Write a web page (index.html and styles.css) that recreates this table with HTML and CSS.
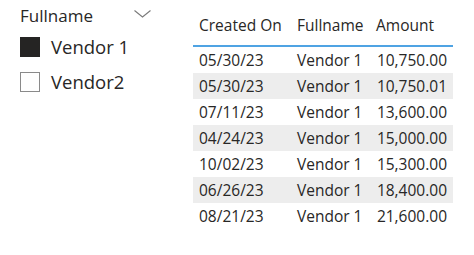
FILE: index.html
```html
<!DOCTYPE html>
<html>
<head>
<meta charset="utf-8">
<link rel="stylesheet" href="styles.css">
</head>
<body>
<div class="page">
  <div class="slicer">
    <div class="slicer-head">
      <span class="slicer-title">Fullname</span>
      <svg class="chev" width="17" height="8" viewBox="0 0 17 8"><path d="M0.5 0.5 L8.5 7 L16.5 0.5" fill="none" stroke="#7a7a7a" stroke-width="1.1"/></svg>
    </div>
    <div class="opt"><span class="box checked"></span><span class="opt-label">Vendor 1</span></div>
    <div class="opt"><span class="box"></span><span class="opt-label">Vendor2</span></div>
  </div>
  <div class="table">
    <div class="row head">
      <div class="c1">Created On</div><div class="c2">Fullname</div><div class="c3 left">Amount</div>
    </div>
    <div class="row"><div class="c1">05/30/23</div><div class="c2">Vendor 1</div><div class="c3">10,750.00</div></div>
    <div class="row alt"><div class="c1">05/30/23</div><div class="c2">Vendor 1</div><div class="c3">10,750.01</div></div>
    <div class="row"><div class="c1">07/11/23</div><div class="c2">Vendor 1</div><div class="c3">13,600.00</div></div>
    <div class="row alt"><div class="c1">04/24/23</div><div class="c2">Vendor 1</div><div class="c3">15,000.00</div></div>
    <div class="row"><div class="c1">10/02/23</div><div class="c2">Vendor 1</div><div class="c3">15,300.00</div></div>
    <div class="row alt"><div class="c1">06/26/23</div><div class="c2">Vendor 1</div><div class="c3">18,400.00</div></div>
    <div class="row"><div class="c1">08/21/23</div><div class="c2">Vendor 1</div><div class="c3">21,600.00</div></div>
  </div>
</div>
</body>
</html>
```
FILE: styles.css
```css
html, body {
  margin: 0;
  padding: 0;
  background: #ffffff;
}
body {
  font-family: "Open Sans", "Noto Sans", sans-serif;
  color: #282726;
  width: 474px;
  height: 255px;
  overflow: hidden;
}
.page {
  display: flex;
}
.slicer {
  width: 173px;
  padding-left: 20px;
}
.slicer-head {
  display: flex;
  align-items: center;
  height: 28px;
  margin-top: 1px;
}
.slicer-title {
  font-size: 17px;
  width: 114px;
}
.chev {
  margin-top: -2px;
}
.opt {
  display: flex;
  align-items: center;
  height: 35px;
}
.box {
  width: 18px;
  height: 18px;
  border: 1px solid #8a8a8a;
  box-sizing: content-box;
  flex: none;
}
.box.checked {
  background: #252423;
  border-color: #252423;
}
.opt-label {
  font-size: 18.5px;
  margin-left: 11px;
}
.table {
  width: 260px;
  margin-top: 9px;
}
.row {
  display: flex;
  height: 26px;
  line-height: 26px;
  font-size: 15.5px;
}
.row.head {
  line-height: 32px;
  padding-bottom: 4px;
  box-sizing: border-box;
  border-bottom: 2px solid #4fa3e3;
  height: 38px;
}
.row.alt {
  background: #ededed;
}
.c1 {
  width: 98px;
  padding-left: 6px;
  box-sizing: border-box;
}
.c2 {
  width: 79px;
  padding-left: 6px;
  box-sizing: border-box;
}
.c3 {
  width: 83px;
  padding-right: 6px;
  text-align: right;
  box-sizing: border-box;
}
.c3.left {
  text-align: left;
  padding-left: 6px;
  padding-right: 0;
}
```
